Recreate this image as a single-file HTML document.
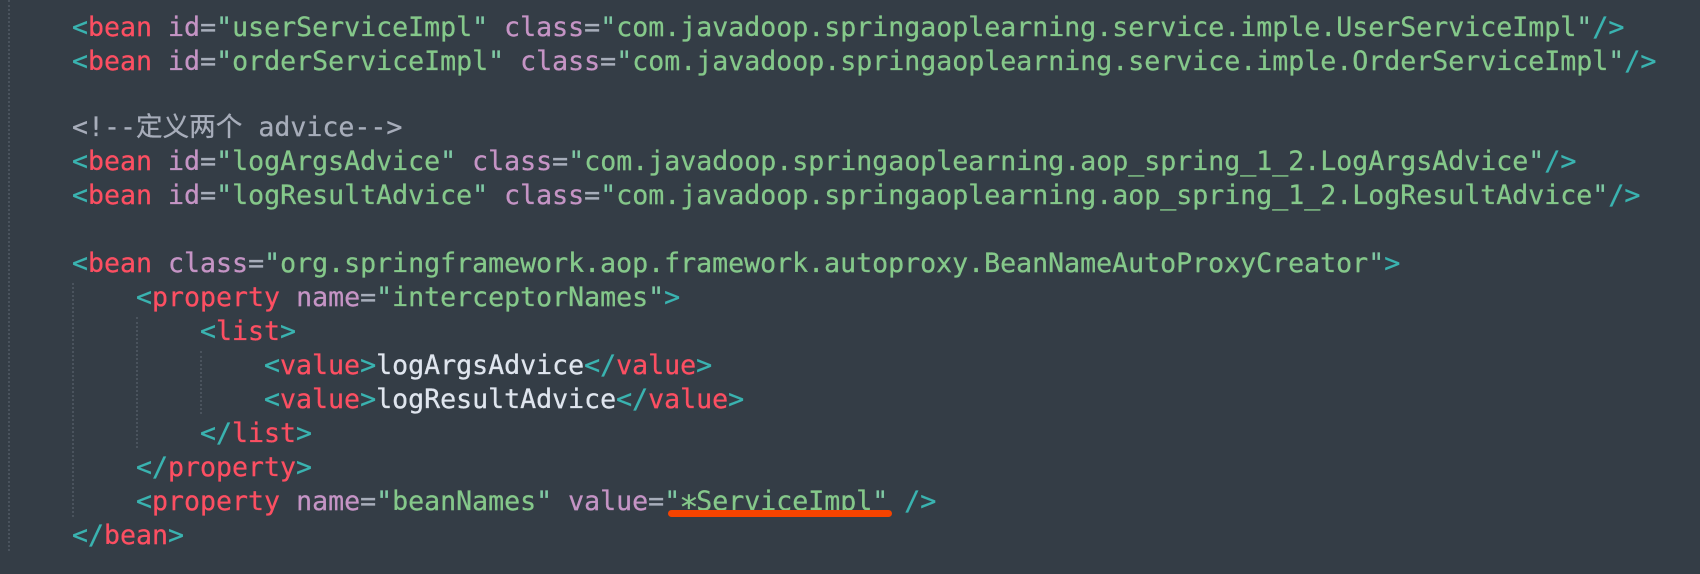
<!DOCTYPE html>
<html>
<head>
<meta charset="utf-8">
<style>
html,body{margin:0;padding:0;background:#343d46;}
#c{position:relative;width:1700px;height:574px;overflow:hidden;background:#343d46;font-family:"DejaVu Sans Mono","Liberation Mono","Noto Sans CJK SC",monospace;font-size:26.58px;color:#d8dee9;-webkit-text-stroke:.3px currentColor;}
.l{position:absolute;left:72px;height:34px;line-height:34px;white-space:pre;}
.t{color:#3ab3b0}.r{color:#fc4f62}.a{color:#c594c5}.e{color:#a7adba}.s{color:#85c88a}.q{color:#7fc9a4}.c{color:#a7adba}.w{color:#dfe5ee}
.g{position:absolute;width:0;border-left:2px dotted #4a535d;}
.st{display:inline-block;width:16px;height:0;line-height:0;font-size:32px;text-align:center;position:relative;top:8px;color:#85c88a;text-indent:-1px;}
#u{position:absolute;left:668px;top:510px;width:224px;height:7px;border-radius:3.5px;background:#f54300;}
</style>
</head>
<body>
<div id="c">
<div class="g" style="left:8px;top:0;height:551px"></div>
<div class="g" style="left:72px;top:283px;height:234px"></div>
<div class="g" style="left:136px;top:317px;height:131px"></div>
<div class="g" style="left:200px;top:351px;height:63px"></div>

<div class="l" style="top:11px"><span class="t">&lt;</span><span class="r">bean</span> <span class="a">id</span><span class="e">=</span><span class="q">"</span><span class="s">userServiceImpl</span><span class="q">"</span> <span class="a">class</span><span class="e">=</span><span class="q">"</span><span class="s">com.javadoop.springaoplearning.service.imple.UserServiceImpl</span><span class="q">"</span><span class="t">/&gt;</span></div>
<div class="l" style="top:45px"><span class="t">&lt;</span><span class="r">bean</span> <span class="a">id</span><span class="e">=</span><span class="q">"</span><span class="s">orderServiceImpl</span><span class="q">"</span> <span class="a">class</span><span class="e">=</span><span class="q">"</span><span class="s">com.javadoop.springaoplearning.service.imple.OrderServiceImpl</span><span class="q">"</span><span class="t">/&gt;</span></div>
<div class="l c" style="top:111px">&lt;!--定义两个 advice--&gt;</div>
<div class="l" style="top:145px"><span class="t">&lt;</span><span class="r">bean</span> <span class="a">id</span><span class="e">=</span><span class="q">"</span><span class="s">logArgsAdvice</span><span class="q">"</span> <span class="a">class</span><span class="e">=</span><span class="q">"</span><span class="s">com.javadoop.springaoplearning.aop_spring_1_2.LogArgsAdvice</span><span class="q">"</span><span class="t">/&gt;</span></div>
<div class="l" style="top:179px"><span class="t">&lt;</span><span class="r">bean</span> <span class="a">id</span><span class="e">=</span><span class="q">"</span><span class="s">logResultAdvice</span><span class="q">"</span> <span class="a">class</span><span class="e">=</span><span class="q">"</span><span class="s">com.javadoop.springaoplearning.aop_spring_1_2.LogResultAdvice</span><span class="q">"</span><span class="t">/&gt;</span></div>
<div class="l" style="top:247px"><span class="t">&lt;</span><span class="r">bean</span> <span class="a">class</span><span class="e">=</span><span class="q">"</span><span class="s">org.springframework.aop.framework.autoproxy.BeanNameAutoProxyCreator</span><span class="q">"</span><span class="t">&gt;</span></div>
<div class="l" style="top:281px">    <span class="t">&lt;</span><span class="r">property</span> <span class="a">name</span><span class="e">=</span><span class="q">"</span><span class="s">interceptorNames</span><span class="q">"</span><span class="t">&gt;</span></div>
<div class="l" style="top:315px">        <span class="t">&lt;</span><span class="r">list</span><span class="t">&gt;</span></div>
<div class="l" style="top:349px">            <span class="t">&lt;</span><span class="r">value</span><span class="t">&gt;</span><span class="w">logArgsAdvice</span><span class="t">&lt;/</span><span class="r">value</span><span class="t">&gt;</span></div>
<div class="l" style="top:383px">            <span class="t">&lt;</span><span class="r">value</span><span class="t">&gt;</span><span class="w">logResultAdvice</span><span class="t">&lt;/</span><span class="r">value</span><span class="t">&gt;</span></div>
<div class="l" style="top:417px">        <span class="t">&lt;/</span><span class="r">list</span><span class="t">&gt;</span></div>
<div class="l" style="top:451px">    <span class="t">&lt;/</span><span class="r">property</span><span class="t">&gt;</span></div>
<div class="l" style="top:485px">    <span class="t">&lt;</span><span class="r">property</span> <span class="a">name</span><span class="e">=</span><span class="q">"</span><span class="s">beanNames</span><span class="q">"</span> <span class="a">value</span><span class="e">=</span><span class="q">"</span><span class="st">*</span><span class="s">ServiceImpl</span><span class="q">"</span> <span class="t">/&gt;</span></div>
<div class="l" style="top:519px"><span class="t">&lt;/</span><span class="r">bean</span><span class="t">&gt;</span></div>
<div id="u"></div>
</div>
</body>
</html>
